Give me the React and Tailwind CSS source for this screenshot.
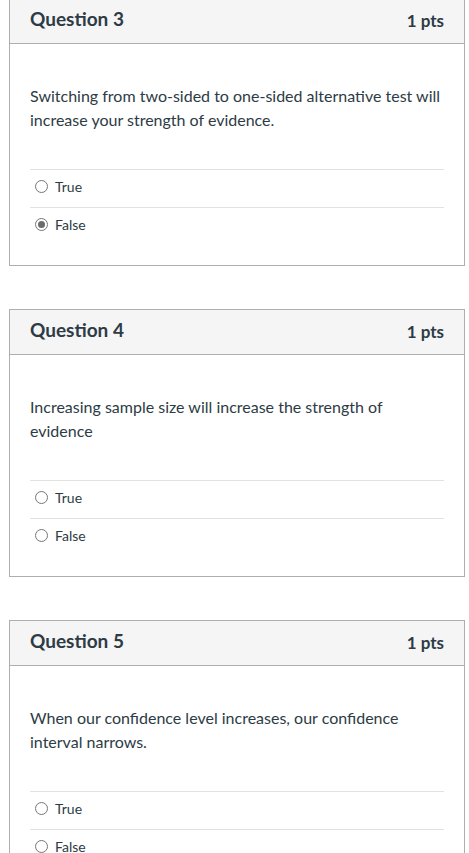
const questions = [
  {
    n: 3,
    text: 'Switching from two-sided to one-sided alternative test will increase your strength of evidence.',
    answer: 'False',
  },
  {
    n: 4,
    text: 'Increasing sample size will increase the strength of evidence',
    answer: null,
  },
  {
    n: 5,
    text: 'When our confidence level increases, our confidence interval narrows.',
    answer: null,
  },
];

function Radio({ checked }) {
  return (
    <span className="flex h-[13px] w-[13px] shrink-0 items-center justify-center rounded-full border border-[#767676] bg-white">
      {checked && <span className="h-[7px] w-[7px] rounded-full bg-[#6b6b6b]" />}
    </span>
  );
}

function Question({ q }) {
  return (
    <div className="ml-[9px] w-[456px] border border-[#aeaeae] bg-white">
      <div className="flex h-[45px] items-center justify-between border-b border-[#aeaeae] bg-[#f5f5f5] px-5 pb-[4px]">
        <h2 className="text-[19px] font-bold text-[#2d3b45]">Question {q.n}</h2>
        <span className="mt-[3px] text-[17px] font-bold text-[#2d3b45]">1 pts</span>
      </div>
      <div className="px-5 pb-5 pt-[40px]">
        <p className="text-[16px] leading-[24px] text-[#2d3b45]">{q.text}</p>
        <div className="mt-[37px]">
          {['True', 'False'].map((opt) => (
            <div key={opt} className="flex h-[38px] items-center gap-[7px] border-t border-[#e2e2e2] pb-[5px] pl-[5px]">
              <Radio checked={q.answer === opt} />
              <span className="text-[14px] text-[#2d3b45]">{opt}</span>
            </div>
          ))}
        </div>
      </div>
    </div>
  );
}

export default function App() {
  return (
    <div className="min-h-screen bg-white font-['Lato',sans-serif]">
      <div className="-mt-[2px] flex flex-col gap-[43px]">
        {questions.map((q) => (
          <Question key={q.n} q={q} />
        ))}
      </div>
    </div>
  );
}
